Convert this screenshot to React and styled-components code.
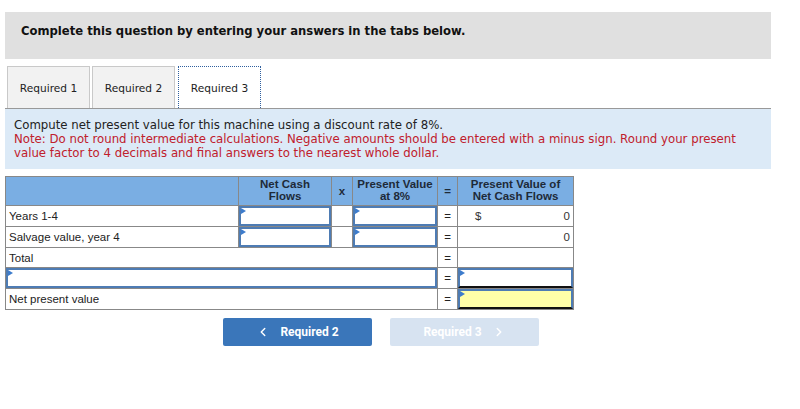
import React from 'react';
import styled, { createGlobalStyle } from 'styled-components';
import { ChevronLeft, ChevronRight } from 'lucide-react';

const GlobalStyle = createGlobalStyle`
  html, body { margin: 0; padding: 0; background: #fff; }
  body { font-family: "DejaVu Sans", Verdana, sans-serif; }
`;

const Page = styled.div`
  width: 766px;
  margin-left: 5px;
  padding-top: 12px;
`;

const Banner = styled.div`
  height: 47px;
  box-sizing: border-box;
  background: #e0e0e0;
  padding: 12px 16px 0 16px;
  font-size: 11.6px;
  line-height: 14px;
  font-weight: bold;
  color: #111;
`;

const TabBar = styled.div`
  display: flex;
  align-items: flex-end;
  margin-top: 7px;
  padding-left: 2px;
  border-bottom: 1px solid #999;
`;

const Tab = styled.div`
  width: 83px;
  height: 42px;
  box-sizing: border-box;
  margin-right: ${p => (p.active ? '0' : '2px')};
  margin-left: ${p => (p.active ? '1px' : '0')};
  display: flex;
  align-items: center;
  justify-content: center;
  font-size: 10.6px;
  color: #222;
  background: ${p => (p.active ? '#fff' : '#f2f2f2')};
  border: ${p => (p.active ? '1px dotted #2f5f9e' : '1px solid #c9c9c9')};
  border-bottom: none;
  padding-top: 1px;
`;

const Instructions = styled.div`
  background: #dceaf7;
  padding: 9px 9px 9px 9px;
  font-size: 11.75px;
  line-height: 14px;
  color: #222;
`;

const Note = styled.div`
  color: #c0202c;
`;

const Grid = styled.table`
  margin-top: 7px;
  width: 568px;
  border-collapse: collapse;
  table-layout: fixed;
  font-family: "Liberation Sans", Arial, sans-serif;
  font-size: 11.5px;
  color: #222;
`;

const Head = styled.th`
  background: #7aaee3;
  border: 1px solid #888;
  height: 27px;
  padding: 0;
  font-weight: bold;
  font-size: 11.5px;
  line-height: 12px;
  color: #1e2a38;
  text-align: center;
  vertical-align: ${p => (p.middle ? 'middle' : 'top')};
  padding-top: ${p => (p.middle ? '0' : '1px')};
`;

const Cell = styled.td`
  border: 1px solid #888;
  height: 19px;
  padding: ${p => (p.flush ? '0' : '0 3px')};
  text-align: ${p => p.align || 'left'};
  vertical-align: middle;
  white-space: nowrap;
  line-height: 14px;
`;

const Field = styled.div`
  position: relative;
  height: 20px;
  box-sizing: border-box;
  border: 2px solid #4e7cb4;
  border-bottom-color: ${p => (p.dark ? '#111' : '#4e7cb4')};
  background: ${p => (p.highlight ? '#ffffa8' : '#fff')};
  &::before {
    content: '';
    position: absolute;
    left: 0;
    top: 0;
    border-left: 5px solid #3d7ccc;
    border-top: 3px solid transparent;
    border-bottom: 3px solid transparent;
  }
`;

const Amount = styled.div`
  display: flex;
  justify-content: space-between;
  padding-left: 14px;
  font-size: 11.5px;
  color: #333;
`;

const Nav = styled.div`
  display: flex;
  gap: 18px;
  margin-top: 8px;
  padding-left: 218px;
`;

const NavButton = styled.div`
  width: 149px;
  height: 28px;
  box-sizing: border-box;
  display: flex;
  align-items: center;
  justify-content: center;
  gap: 10px;
  border-radius: 2px;
  background: ${p => (p.disabled ? '#d7e3f1' : '#3a76ba')};
  color: #fff;
  font-family: Roboto, "Liberation Sans", Arial, sans-serif;
  font-weight: bold;
  font-size: 12px;
`;

export default function App() {
  return (
    <>
      <GlobalStyle />
      <Page>
        <Banner>Complete this question by entering your answers in the tabs below.</Banner>
        <TabBar>
          <Tab>Required 1</Tab>
          <Tab>Required 2</Tab>
          <Tab active>Required 3</Tab>
        </TabBar>
        <Instructions>
          <div>Compute net present value for this machine using a discount rate of 8%.</div>
          <Note>
            Note: Do not round intermediate calculations. Negative amounts should be entered with a minus sign. Round your present
            <br />
            value factor to 4 decimals and final answers to the nearest whole dollar.
          </Note>
        </Instructions>
        <Grid>
          <colgroup>
            <col style={{ width: 233 }} />
            <col style={{ width: 93 }} />
            <col style={{ width: 21 }} />
            <col style={{ width: 85 }} />
            <col style={{ width: 20 }} />
            <col style={{ width: 116 }} />
          </colgroup>
          <thead>
            <tr>
              <Head />
              <Head>Net Cash<br />Flows</Head>
              <Head middle>x</Head>
              <Head>Present Value<br />at 8%</Head>
              <Head middle>=</Head>
              <Head>Present Value of<br />Net Cash Flows</Head>
            </tr>
          </thead>
          <tbody>
            <tr>
              <Cell>Years 1-4</Cell>
              <Cell flush><Field /></Cell>
              <Cell />
              <Cell flush><Field /></Cell>
              <Cell align="center">=</Cell>
              <Cell><Amount><span>$</span><span>0</span></Amount></Cell>
            </tr>
            <tr>
              <Cell>Salvage value, year 4</Cell>
              <Cell flush><Field /></Cell>
              <Cell />
              <Cell flush><Field /></Cell>
              <Cell align="center">=</Cell>
              <Cell><Amount><span /><span>0</span></Amount></Cell>
            </tr>
            <tr>
              <Cell colSpan={4}>Total</Cell>
              <Cell align="center">=</Cell>
              <Cell />
            </tr>
            <tr>
              <Cell colSpan={4} flush><Field /></Cell>
              <Cell align="center">=</Cell>
              <Cell flush><Field dark /></Cell>
            </tr>
            <tr>
              <Cell colSpan={4}>Net present value</Cell>
              <Cell align="center">=</Cell>
              <Cell flush><Field dark highlight /></Cell>
            </tr>
          </tbody>
        </Grid>
        <Nav>
          <NavButton>
            <ChevronLeft size={14} strokeWidth={2.5} />
            <span>Required 2</span>
          </NavButton>
          <NavButton disabled>
            <span>Required 3</span>
            <ChevronRight size={14} strokeWidth={2.5} />
          </NavButton>
        </Nav>
      </Page>
    </>
  );
}
